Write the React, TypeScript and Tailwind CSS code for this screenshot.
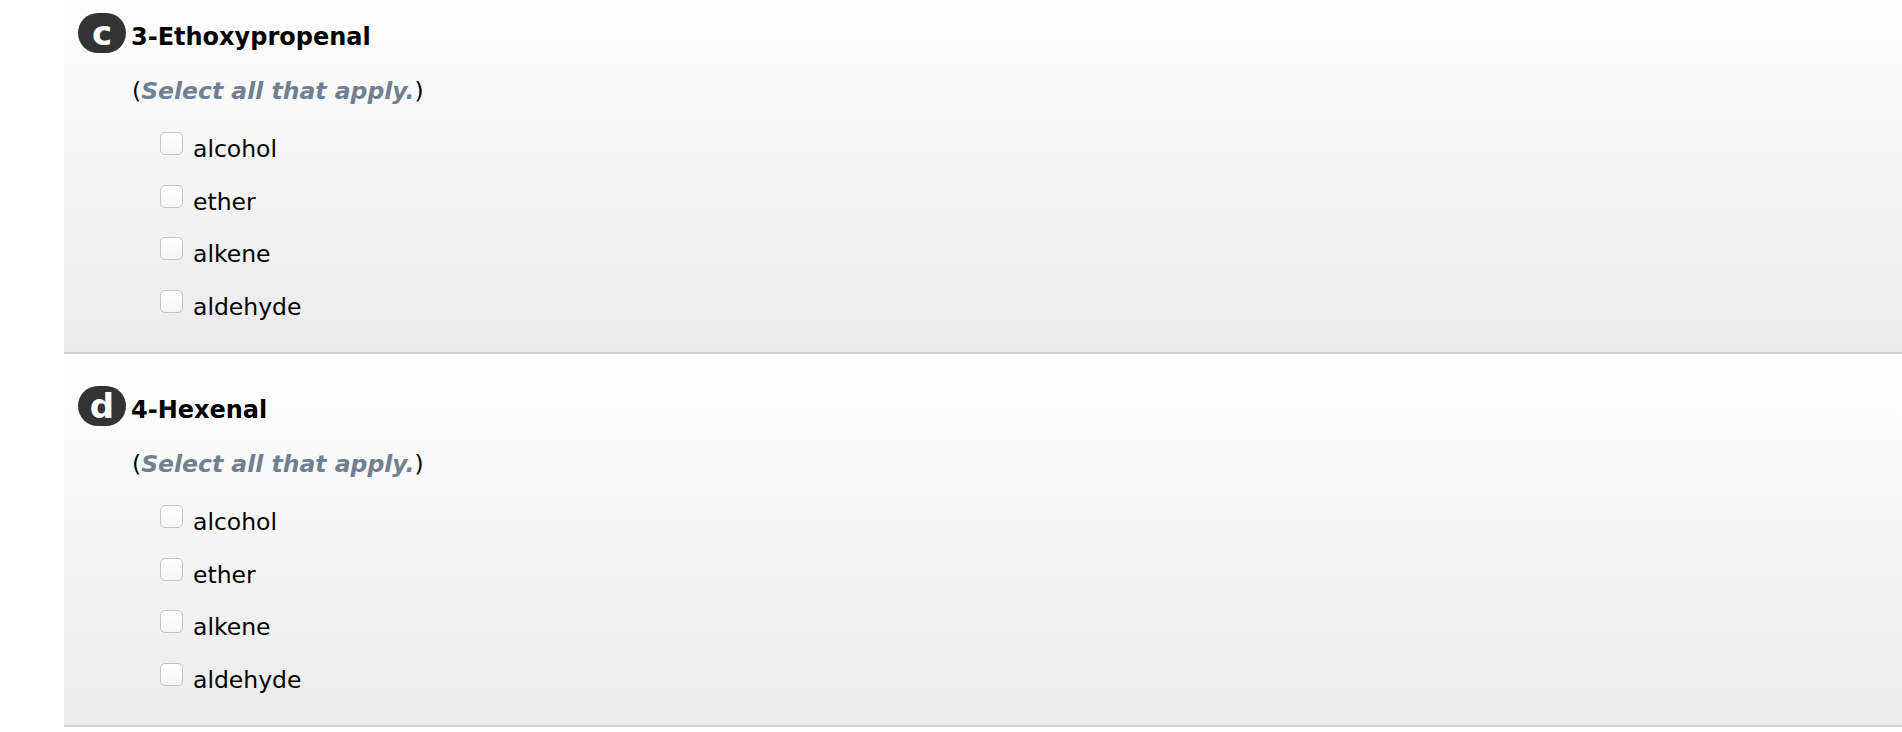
import React from "react";

const OPTIONS = ["alcohol", "ether", "alkene", "aldehyde"];

const QUESTIONS = [
  { letter: "c", title: "3-Ethoxypropenal" },
  { letter: "d", title: "4-Hexenal" },
];

function Question({ letter, title }: { letter: string; title: string }) {
  return (
    <section className="bg-gradient-to-b from-white to-[#ebebeb] border-b-2 border-[#d2d2d2] pt-[32px] pb-[30px]">
      <div className="flex items-start h-[40px] pl-[14px]">
        <span className="flex items-center justify-center w-[48px] h-[40px] rounded-full bg-[#333333] text-white font-bold text-[34px] leading-[40px]">
          {letter}
        </span>
        <h3 className="ml-[5px] mt-[4px] font-bold text-[24px] leading-[40px] text-black">{title}</h3>
      </div>
      <p className="mt-[23px] pl-[68px] text-[23.5px] leading-[30px] text-black">
        (<em className="font-bold italic text-[#708090]">Select all that apply.</em>)
      </p>
      <ul className="mt-[26px] pl-[96px] flex flex-col gap-[20.7px]">
        {OPTIONS.map((opt) => (
          <li key={opt} className="flex items-start h-[32px]">
            <span className="w-[23px] h-[23px] rounded-[5px] border border-[#c4c4c4] bg-gradient-to-b from-white to-[#f6f6f6]" />
            <label className="ml-[10px] mt-[2px] text-[23.5px] leading-[30px] text-black">{opt}</label>
          </li>
        ))}
      </ul>
    </section>
  );
}

export default function App() {
  return (
    <div
      className="bg-white min-h-[732px] pl-[64px] overflow-hidden"
      style={{ fontFamily: '"DejaVu Sans", Verdana, sans-serif' }}
    >
      <div className="-mt-[19px]">
        {QUESTIONS.map((q) => (
          <Question key={q.letter} letter={q.letter} title={q.title} />
        ))}
      </div>
    </div>
  );
}
